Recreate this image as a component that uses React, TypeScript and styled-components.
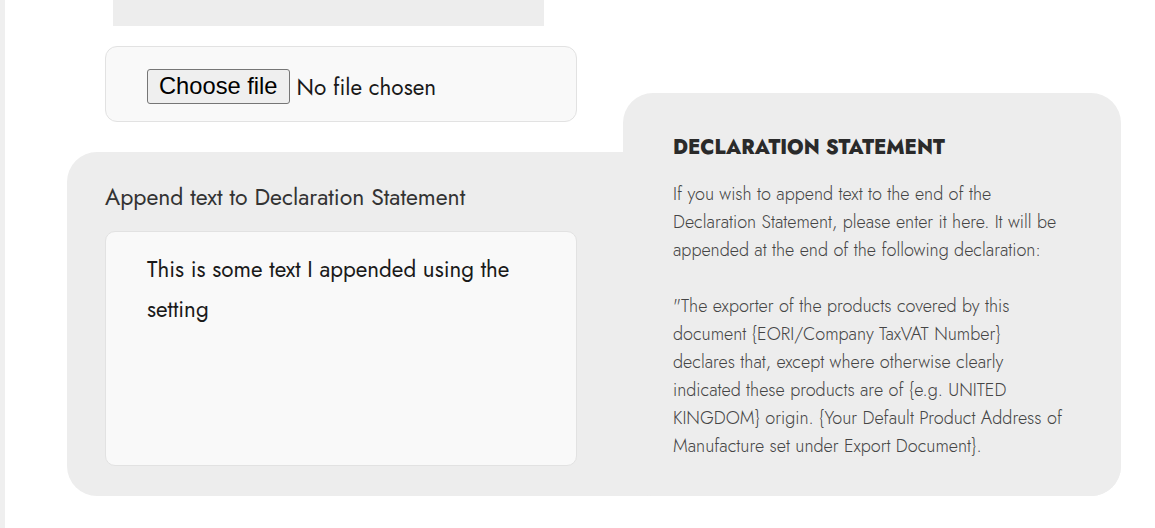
import React, { useEffect, useRef, useState } from "react";
import styled, { createGlobalStyle } from "styled-components";

const FONT = `Jost, Futura, "Futura PT", Lato, "Liberation Sans", sans-serif`;

const Global = createGlobalStyle`
  html, body { margin: 0; padding: 0; background: #ffffff; }
  body { font-family: ${FONT}; }
  #root { min-height: 528px; }
`;

const Page = styled.div`
  display: flex;
  min-height: 528px;
`;

const SideEdge = styled.div`
  width: 5px;
  flex: none;
  background: #efefef;
`;

const Main = styled.main`
  flex: 1;
  display: flex;
  flex-direction: column;
  padding: 0 34px 32px 62px;
`;

const Upper = styled.div`
  display: flex;
  flex-direction: column;
  padding-left: 38px;
`;

const PreviewBar = styled.div`
  width: 431px;
  height: 26px;
  margin-left: 8px;
  background: #ededed;
`;

const FileBox = styled.label`
  box-sizing: border-box;
  width: 472px;
  height: 76px;
  margin-top: 20px;
  display: flex;
  align-items: center;
  gap: 7px;
  padding: 4px 0 0 41px;
  background: #f9f9f9;
  border: 1px solid #e2e2e2;
  border-radius: 12px;
  cursor: pointer;
`;

const HiddenInput = styled.input`
  position: absolute;
  width: 1px;
  height: 1px;
  opacity: 0;
  pointer-events: none;
`;

const ChooseButton = styled.span`
  box-sizing: border-box;
  display: inline-flex;
  align-items: center;
  height: 35px;
  padding: 0 11px;
  font-family: "Liberation Sans", Arial, sans-serif;
  font-size: 23.7px;
  color: #000;
  background: #efefef;
  border: 1.5px solid #767676;
  border-radius: 3px;
`;

const FileName = styled.span`
  font-size: 22.5px;
  color: #1a1a1a;
  padding-top: 2px;
`;

const Panel = styled.section`
  margin-top: 30px;
  display: grid;
  grid-template-columns: 556px 1fr;
  background: #ededed;
  border-radius: 30px;
`;

const LeftCol = styled.div`
  display: flex;
  flex-direction: column;
  padding: 30px 0 30px 38px;
`;

const FieldLabel = styled.label`
  font-size: 23px;
  line-height: 30px;
  color: #333;
  margin-bottom: 19px;
`;

const TextBox = styled.textarea`
  box-sizing: border-box;
  width: 472px;
  height: 235px;
  padding: 17px 40px 0 41px;
  background: #f9f9f9;
  border: 1px solid #e2e2e2;
  border-radius: 10px;
  font-family: ${FONT};
  font-size: 22.4px;
  line-height: 40px;
  color: #1a1a1a;
  resize: none;
  outline: none;
  caret-color: #000;
`;

const InfoCard = styled.aside`
  margin-top: -59px;
  background: #ededed;
  border-radius: 30px;
  padding: 40px 56px 35px 50px;
`;

const InfoTitle = styled.h2`
  margin: 0 0 17px;
  font-size: 20px;
  line-height: 30px;
  font-weight: 800;
  letter-spacing: 0;
  color: #2a2a2a;
`;

const InfoText = styled.p`
  margin: 0;
  font-size: 18px;
  line-height: 28px;
  font-weight: 300;
  color: #454545;

  & + & {
    margin-top: 28px;
  }
`;

export default function App() {
  const [value, setValue] = useState("This is some text I appended using the setting");
  const [fileName, setFileName] = useState<string | null>(null);
  const ref = useRef<HTMLTextAreaElement>(null);

  useEffect(() => {
    const el = ref.current;
    if (el) {
      el.focus();
      el.setSelectionRange(el.value.length, el.value.length);
    }
  }, []);

  return (
    <Page>
      <Global />
      <SideEdge />
      <Main>
        <Upper>
          <PreviewBar />
          <FileBox>
            <HiddenInput
              type="file"
              onChange={(e) => setFileName(e.target.files?.[0]?.name ?? null)}
            />
            <ChooseButton>Choose file</ChooseButton>
            <FileName>{fileName ?? "No file chosen"}</FileName>
          </FileBox>
        </Upper>
        <Panel>
          <LeftCol>
            <FieldLabel htmlFor="append-text">Append text to Declaration Statement</FieldLabel>
            <TextBox
              id="append-text"
              ref={ref}
              value={value}
              onChange={(e) => setValue(e.target.value)}
            />
          </LeftCol>
          <InfoCard>
            <InfoTitle>DECLARATION STATEMENT</InfoTitle>
            <InfoText>
              If you wish to append text to the end of the Declaration Statement, please enter it
              here. It will be appended at the end of the following declaration:
            </InfoText>
            <InfoText>
              "The exporter of the products covered by this document {"{EORI/Company TaxVAT Number}"}{" "}
              declares that, except where otherwise clearly indicated these products are of{" "}
              {"{e.g. UNITED KINGDOM}"} origin. {"{Your Default Product Address of Manufacture set under Export Document}"}.
            </InfoText>
          </InfoCard>
        </Panel>
      </Main>
    </Page>
  );
}
